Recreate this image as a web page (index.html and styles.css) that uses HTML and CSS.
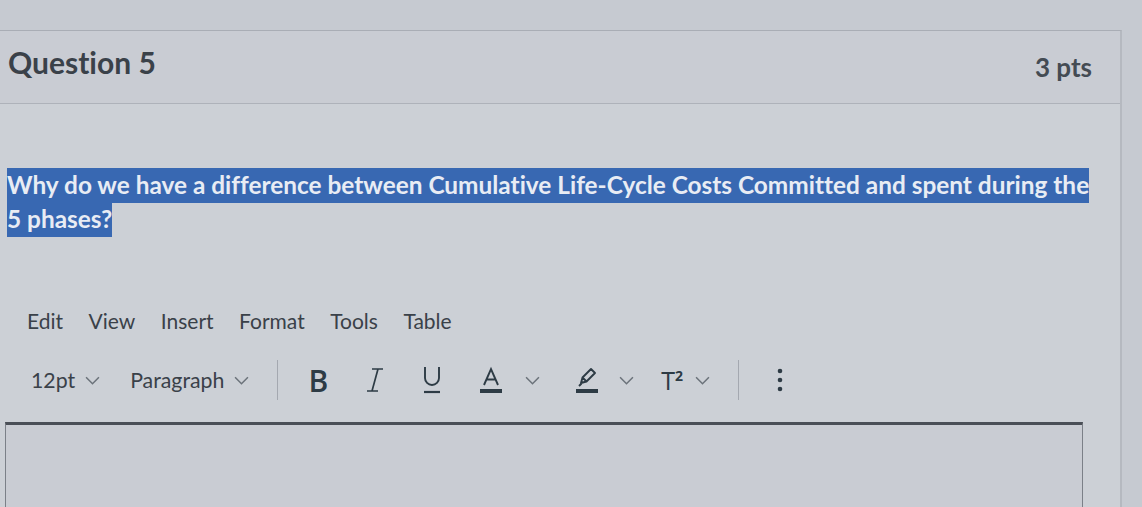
FILE: index.html
```
<!DOCTYPE html>
<html lang="en">
<head>
  <meta charset="UTF-8">
  <title>Question 5</title>
  <link rel="stylesheet" href="styles.css">
</head>
<body>
  <div class="question">
    <div class="question-header">
      <h2>Question 5</h2>
      <span class="points">3 pts</span>
    </div>

    <div class="question-body">
      <p class="question-text"><span class="selected">Why do we have a difference between Cumulative Life-Cycle Costs Committed and spent during the 5 phases?</span></p>

      <div class="menubar">
        <span>Edit</span>
        <span>View</span>
        <span>Insert</span>
        <span>Format</span>
        <span>Tools</span>
        <span>Table</span>
      </div>

      <div class="toolbar">
        <div class="tool-group sizes">
          <span class="dropdown">12pt <svg class="chev" viewBox="0 0 14 8"><path d="M1 1l6 6 6-6"/></svg></span>
          <span class="dropdown">Paragraph <svg class="chev" viewBox="0 0 14 8"><path d="M1 1l6 6 6-6"/></svg></span>
        </div>
        <div class="tool-group formats">
          <span class="btn bold">B</span>
          <span class="btn">
            <svg width="18" height="26" viewBox="0 0 18 26"><path d="M6 2h11M1 24h11M12 2L6 24" fill="none" stroke="#2d3b45" stroke-width="1.7"/></svg>
          </span>
          <span class="btn">
            <svg width="20" height="30" viewBox="0 0 20 30"><path d="M3 2v11a7 7 0 0 0 14 0V2" fill="none" stroke="#2d3b45" stroke-width="1.9"/><path d="M2 27h16" stroke="#2d3b45" stroke-width="2.2"/></svg>
          </span>
          <span class="btn split">
            <svg width="22" height="28" viewBox="0 0 22 28"><path d="M4 19L11 3l7 16M6.6 13.5h8.8" fill="none" stroke="#2d3b45" stroke-width="1.9"/><rect x="0" y="23" width="22" height="4" fill="#2d3b45"/></svg>
            <svg class="chev" viewBox="0 0 14 8"><path d="M1 1l6 6 6-6"/></svg>
          </span>
          <span class="btn split pen">
            <svg width="24" height="28" viewBox="0 0 24 28"><path d="M6 17l1.5-5.5L16 3l4 4-8.5 8.5zM7.5 11.5l4 4M4 20l2.5-2.5" fill="none" stroke="#2d3b45" stroke-width="1.9" stroke-linejoin="round"/><rect x="1" y="23" width="22" height="4" fill="#2d3b45"/></svg>
            <svg class="chev" viewBox="0 0 14 8"><path d="M1 1l6 6 6-6"/></svg>
          </span>
          <span class="btn split sup-btn">
            <span class="sup">T<sup>2</sup></span>
            <svg class="chev" viewBox="0 0 14 8"><path d="M1 1l6 6 6-6"/></svg>
          </span>
        </div>
        <div class="tool-group more">
          <svg width="6" height="26" viewBox="0 0 6 26"><circle cx="3" cy="4" r="2.3"/><circle cx="3" cy="13" r="2.3"/><circle cx="3" cy="22" r="2.3"/></svg>
        </div>
      </div>

      <div class="editor"></div>
    </div>
  </div>
</body>
</html>
```

FILE: styles.css
```
body {
  margin: 0;
  background: #c6cad1;
  font-family: Lato, "Open Sans", sans-serif;
  font-variant-ligatures: no-common-ligatures;
  color: #2d3b45;
  overflow: hidden;
}

.question {
  margin-top: 30px;
  width: 1120px;
  height: 477px;
  border-top: 1px solid #a9adb5;
  border-right: 2px solid #b5b9c0;
  background: #ccd0d6;
}

.question-header {
  display: flex;
  justify-content: space-between;
  align-items: center;
  height: 72px;
  padding: 0 28px 0 8px;
  background: #c9ccd3;
  border-bottom: 1px solid #aeb2ba;
}

.question-header h2 {
  margin: 0;
  font-size: 30px;
  font-weight: 700;
  color: #3a4149;
  position: relative;
  top: -5px;
}

.points {
  font-size: 26px;
  font-weight: 700;
  color: #444b53;
}

.question-body {
  padding-left: 7px;
}

.question-text {
  margin: 64px 0 0 0;
  width: 1090px;
  font-size: 24.4px;
  font-weight: 700;
  line-height: 34px;
}

.selected {
  background: #3868b2;
  color: #e8ecf4;
  padding: 2px 0 4px;
}

.menubar {
  display: flex;
  gap: 25.5px;
  margin: 72px 0 0 20px;
  font-size: 21px;
  color: #3a4149;
}

.toolbar {
  display: flex;
  align-items: center;
  margin: 27px 0 0 24px;
  height: 40px;
}

.tool-group {
  display: flex;
  align-items: center;
  height: 40px;
}

.tool-group + .tool-group {
  border-left: 1px solid #a4a8b0;
}

.sizes {
  gap: 30px;
  padding-right: 28px;
}

.dropdown {
  display: flex;
  align-items: center;
  gap: 10px;
  font-size: 21.3px;
  color: #3a4149;
}

.chev {
  width: 15px;
  height: 9px;
  fill: none;
  stroke: #6b727a;
  stroke-width: 1.4;
}

.formats {
  padding: 0 28px 0 30px;
  gap: 38px;
}

.btn {
  display: flex;
  align-items: center;
}

.btn.split {
  gap: 23px;
}

.btn.pen {
  gap: 20px;
}

.btn.sup-btn {
  gap: 12px;
}

.formats .pen {
  margin-left: -3px;
}

.formats .sup-btn {
  margin-left: -11px;
}

.bold {
  font-family: "Open Sans", sans-serif;
  font-size: 30px;
  font-weight: 600;
  color: #2d3b45;
}

.sup {
  font-size: 25px;
  color: #2d3b45;
  font-family: "Open Sans", sans-serif;
}

.sup sup {
  font-size: 14px;
  font-weight: 700;
}

.more {
  padding-left: 38px;
  fill: #2d3b45;
}

.editor {
  margin: 22px 0 0 -2px;
  width: 1076px;
  height: 120px;
  border: 1px solid #7b8088;
  border-top: 3px solid #4a4f57;
  background: #c9ccd3;
}
```
